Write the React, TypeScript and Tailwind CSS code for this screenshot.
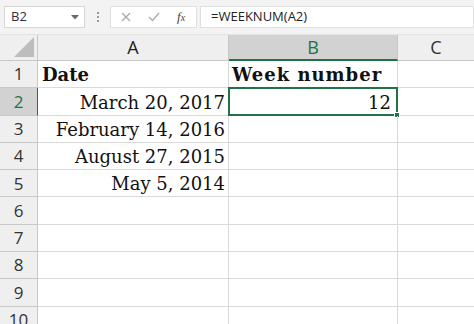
import React from "react";

function Row({ n, a, b, sel }: { n: number; a?: React.ReactNode; b?: React.ReactNode; sel?: boolean }) {
  return (
    <>
      <div
        className={`h-[27.3px] flex items-center justify-center border-b border-r text-[17px] ${
          sel ? "bg-[#d2d2d2] text-[#217346] border-r-[#217346] border-b-[#c8c8c8]" : "bg-[#efefef] text-[#333] border-[#c8c8c8]"
        }`}
        style={{ fontFamily: "'Open Sans', 'Noto Sans', sans-serif" }}
      >
        {n}
      </div>
      <div className="h-[27.3px] border-b border-r border-[#dadada] flex items-end">{a}</div>
      <div className="h-[27.3px] border-b border-r border-[#dadada] flex items-end relative">
        {b}
        {sel && (
          <div className="absolute -left-[1px] -top-[1px] -right-[1px] -bottom-[1px] border-2 border-[#217346]">
            <div className="absolute -right-[4px] -bottom-[4px] w-[6px] h-[6px] bg-[#217346] border border-white" />
          </div>
        )}
      </div>
      <div className="h-[27.3px] border-b border-[#dadada]" />
    </>
  );
}

export default function App() {
  const serif = { fontFamily: "'DejaVu Serif', 'Liberation Serif', serif" };
  const sans = { fontFamily: "'Open Sans', 'Noto Sans', sans-serif" };
  const cell = "text-[18px] leading-none text-[#111]";
  return (
    <div className="w-[474px] h-[324px] overflow-hidden bg-white">
      {/* formula bar */}
      <div className="h-[35px] bg-[#f3f3f3] flex items-start pt-[6px] border-b border-[#e2e2e2]">
        <div
          className="ml-[4px] w-[81px] h-[22px] bg-white border border-[#d6d6d6] flex items-center justify-between pl-[6px] pr-[5px] text-[13px] text-[#333]"
          style={sans}
        >
          <span>B2</span>
          <svg width="8" height="5" viewBox="0 0 8 5">
            <path d="M0 0 L8 0 L4 4.5 Z" fill="#6a6a6a" />
          </svg>
        </div>
        <div className="w-[25px] h-[22px] flex flex-col items-center justify-center gap-[2px]">
          <div className="w-[2px] h-[2px] bg-[#9a9a9a]" />
          <div className="w-[2px] h-[2px] bg-[#9a9a9a]" />
          <div className="w-[2px] h-[2px] bg-[#9a9a9a]" />
        </div>
        <div className="w-[87px] h-[22px] bg-white border border-[#e0e0e0] flex items-center">
          <svg className="ml-[10px]" width="10" height="10" viewBox="0 0 10 10">
            <path d="M1 1 L9 9 M9 1 L1 9" stroke="#a8a8a8" strokeWidth="1.3" />
          </svg>
          <svg className="ml-[17px]" width="12" height="10" viewBox="0 0 12 10">
            <path d="M1 5 L4.5 8.5 L11 1" stroke="#a8a8a8" strokeWidth="1.3" fill="none" />
          </svg>
          <span
            className="ml-[17px] text-[13px] italic text-[#444]"
            style={{ fontFamily: "'Liberation Serif', serif" }}
          >
            f<span className="text-[10px]">x</span>
          </span>
        </div>
        <div
          className="ml-[3px] flex-1 h-[22px] bg-white border border-[#e0e0e0] flex items-center pl-[10px] text-[13px] text-[#222]"
          style={sans}
        >
          =WEEKNUM(A2)
        </div>
      </div>
      {/* grid */}
      <div className="grid grid-cols-[38px_191px_169px_76px]">
        {/* header row */}
        <div className="h-[26px] bg-[#efefef] border-b border-r border-[#c8c8c8] flex items-end justify-end pr-[3px] pb-[3px]">
          <svg width="20" height="20" viewBox="0 0 20 20">
            <path d="M20 0 L20 20 L0 20 Z" fill="#bdbdbd" />
          </svg>
        </div>
        <div
          className="h-[26px] bg-[#efefef] border-b border-r border-[#c8c8c8] flex items-center justify-center text-[18px] text-[#222]"
          style={sans}
        >
          A
        </div>
        <div
          className="h-[26px] bg-[#d2d2d2] border-b-2 border-b-[#217346] border-r border-r-[#c8c8c8] flex items-center justify-center text-[18px] text-[#217346]"
          style={sans}
        >
          B
        </div>
        <div
          className="h-[26px] bg-[#efefef] border-b border-[#c8c8c8] flex items-center justify-center text-[18px] text-[#333]"
          style={sans}
        >
          C
        </div>

        <Row
          n={1}
          a={<span className={`pl-[4px] pb-[3px] font-bold ${cell}`} style={serif}>Date</span>}
          b={<span className={`pl-[3px] pb-[3px] font-bold tracking-[1px] ${cell}`} style={serif}>Week number</span>}
        />
        <Row
          n={2}
          sel
          a={<span className={`ml-auto pr-[3px] pb-[3px] ${cell}`} style={serif}>March 20, 2017</span>}
          b={<span className={`ml-auto pr-[6px] pb-[3px] ${cell}`} style={serif}>12</span>}
        />
        <Row n={3} a={<span className={`ml-auto pr-[3px] pb-[3px] ${cell}`} style={serif}>February 14, 2016</span>} />
        <Row n={4} a={<span className={`ml-auto pr-[3px] pb-[3px] ${cell}`} style={serif}>August 27, 2015</span>} />
        <Row n={5} a={<span className={`ml-auto pr-[3px] pb-[3px] ${cell}`} style={serif}>May 5, 2014</span>} />
        <Row n={6} />
        <Row n={7} />
        <Row n={8} />
        <Row n={9} />
        <Row n={10} />
      </div>
    </div>
  );
}
